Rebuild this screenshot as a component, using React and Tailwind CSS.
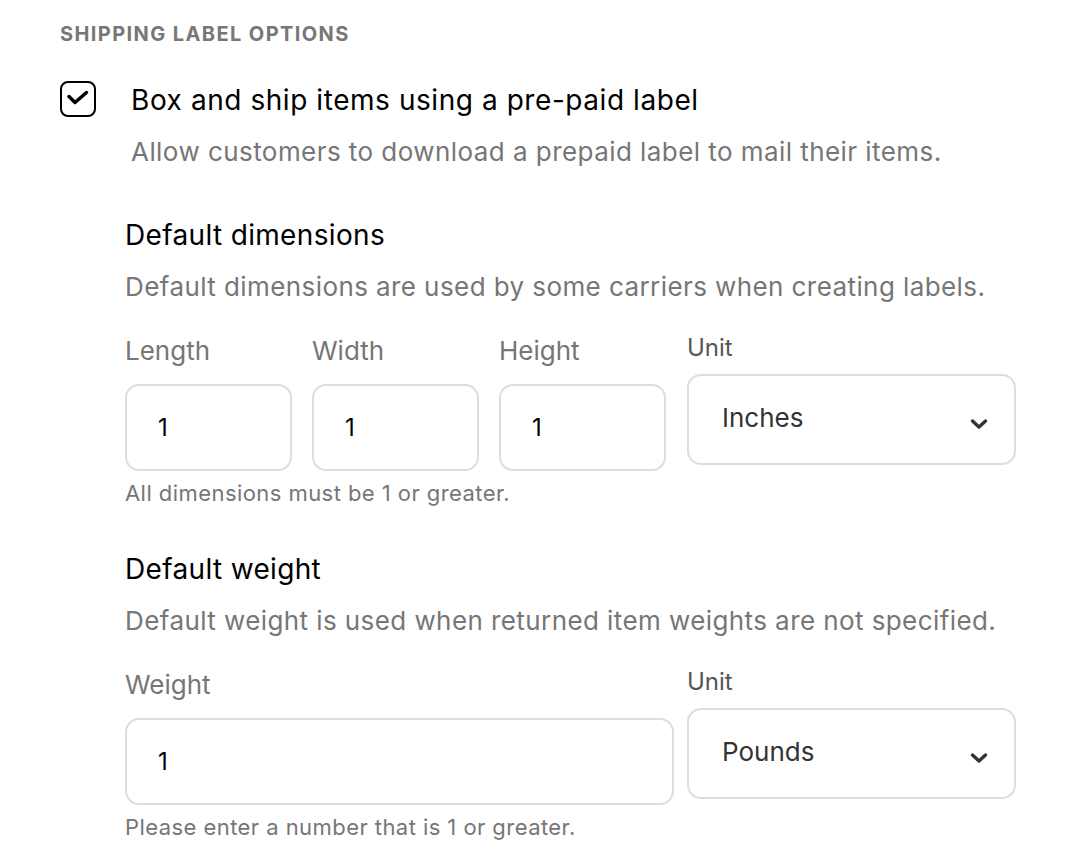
import { useState } from 'react';

const Chevron = () => (
  <svg width="18" height="12" viewBox="0 0 18 12" fill="none" className="shrink-0">
    <path d="M2.5 3 L9 9 L15.5 3" stroke="#333" strokeWidth="3.4" strokeLinecap="round" strokeLinejoin="round" />
  </svg>
);

const NumberField = ({ label, value, className }) => (
  <div className={className}>
    <div className="text-[26px] leading-[32px] text-[#767676] mb-[17px]">{label}</div>
    <div className="h-[87px] border-2 border-[#dddddd] rounded-[14px] flex items-center px-[31px] text-[24px] text-black">
      {value}
    </div>
  </div>
);

const UnitSelect = ({ value }) => (
  <div className="w-[329px] shrink-0">
    <div className="text-[24px] leading-[30px] text-[#555] mb-[11px]">Unit</div>
    <div className="h-[91px] border-2 border-[#dddddd] rounded-[14px] flex items-center justify-between pl-[33px] pr-[26px] pb-[4px]">
      <span className="text-[26px] text-[#333]">{value}</span>
      <span className="pt-[12px]"><Chevron /></span>
    </div>
  </div>
);

const App = () => {
  const [checked, setChecked] = useState(true);

  return (
    <div className="min-h-screen bg-white pl-[60px] pr-[40px] pt-[22px]" style={{ fontFamily: 'Inter, "Noto Sans", sans-serif' }}>
      <h2 className="text-[20px] leading-[24px] font-bold tracking-[0.07em] text-[#777]">SHIPPING LABEL OPTIONS</h2>

      <div className="flex mt-[35px]">
        <button
          onClick={() => setChecked(!checked)}
          className="w-[36px] h-[36px] border-2 border-black rounded-[8px] flex items-center justify-center shrink-0"
        >
          {checked && (
            <svg width="24" height="18" viewBox="0 0 24 18" fill="none" className="-mt-[1px]">
              <path d="M3 6.5 L9 12.5 L20.5 2.5" stroke="black" strokeWidth="3.5" strokeLinecap="round" strokeLinejoin="round" />
            </svg>
          )}
        </button>
        <div className="ml-[35px]">
          <div className="text-[28px] leading-[40px] tracking-[0.02em] text-black -mt-[1px]">Box and ship items using a pre-paid label</div>
          <div className="text-[26px] leading-[36px] tracking-[0.017em] text-[#767676] mt-[14px]">Allow customers to download a prepaid label to mail their items.</div>
        </div>
      </div>

      <div className="ml-[65px] mt-[47px]">
        <div className="text-[28px] leading-[36px] tracking-[0.012em] text-black">Default dimensions</div>
        <div className="text-[26px] leading-[36px] tracking-[0.016em] text-[#767676] mt-[16px]">Default dimensions are used by some carriers when creating labels.</div>

        <div className="flex gap-[20px] mt-[30px] pb-[6px]">
          <NumberField label="Length" value="1" className="w-[167px] shrink-0" />
          <NumberField label="Width" value="1" className="w-[167px] shrink-0" />
          <NumberField label="Height" value="1" className="w-[167px] shrink-0" />
          <div className="-mt-[2px] ml-[1px] shrink-0"><UnitSelect value="Inches" /></div>
        </div>
        <div className="text-[22px] leading-[28px] tracking-[0.02em] text-[#767676] mt-[2px]">All dimensions must be 1 or greater.</div>

        <div className="text-[28px] leading-[36px] tracking-[0.012em] text-black mt-[44px]">Default weight</div>
        <div className="text-[26px] leading-[36px] tracking-[0.016em] text-[#767676] mt-[16px]">Default weight is used when returned item weights are not specified.</div>

        <div className="flex gap-[13px] mt-[30px] pb-[6px]">
          <NumberField label="Weight" value="1" className="w-[549px] shrink-0" />
          <div className="-mt-[2px] shrink-0"><UnitSelect value="Pounds" /></div>
        </div>
        <div className="text-[22px] leading-[28px] tracking-[0.02em] text-[#767676] mt-[2px]">Please enter a number that is 1 or greater.</div>
      </div>
    </div>
  );
};

export default App;
